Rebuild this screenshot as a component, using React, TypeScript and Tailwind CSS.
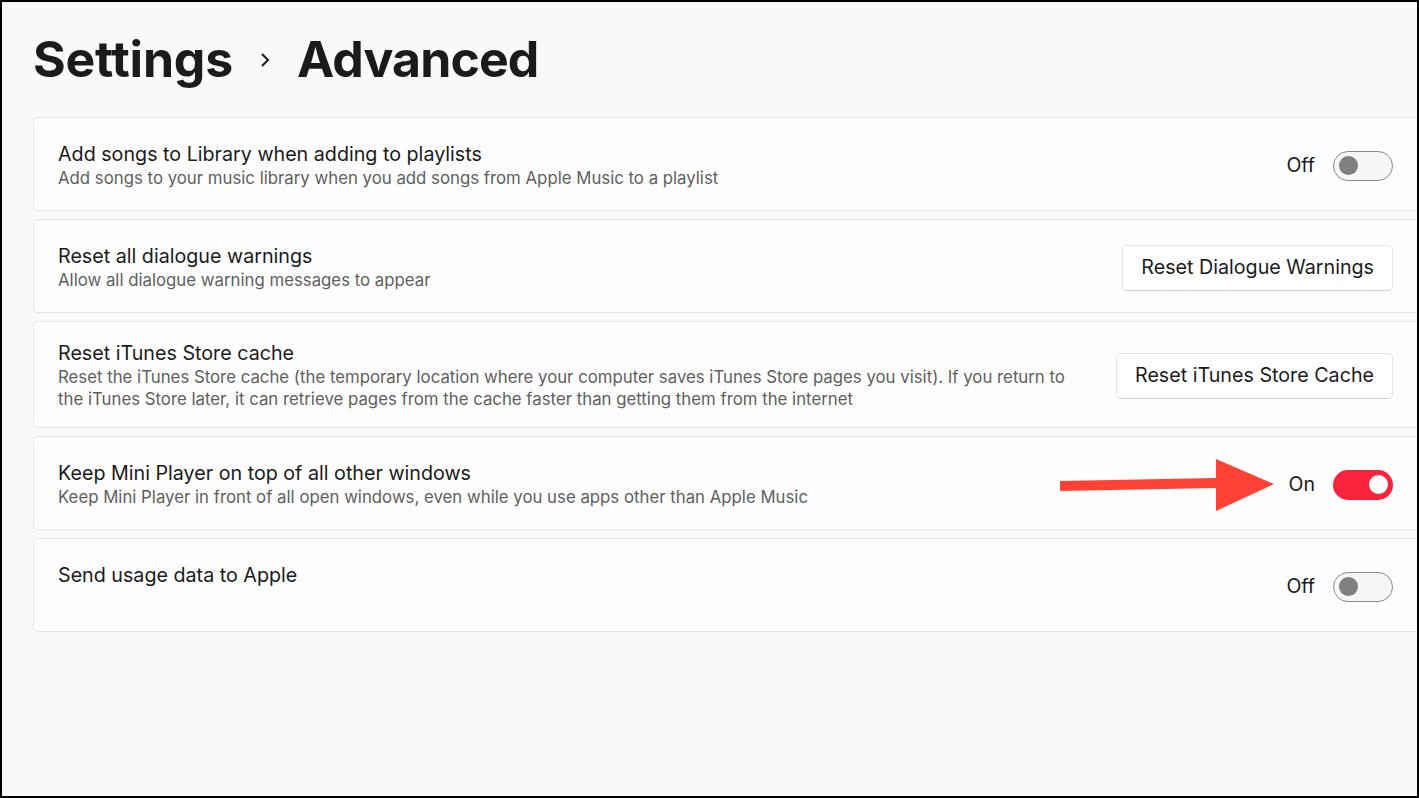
import React from "react";

type Row = {
  title: string;
  desc?: string;
  control: "off" | "on" | string;
};

const ROWS: Row[] = [
  {
    title: "Add songs to Library when adding to playlists",
    desc: "Add songs to your music library when you add songs from Apple Music to a playlist",
    control: "off",
  },
  {
    title: "Reset all dialogue warnings",
    desc: "Allow all dialogue warning messages to appear",
    control: "Reset Dialogue Warnings",
  },
  {
    title: "Reset iTunes Store cache",
    desc:
      "Reset the iTunes Store cache (the temporary location where your computer saves iTunes Store pages you visit). If you return to the iTunes Store later, it can retrieve pages from the cache faster than getting them from the internet",
    control: "Reset iTunes Store Cache",
  },
  {
    title: "Keep Mini Player on top of all other windows",
    desc: "Keep Mini Player in front of all open windows, even while you use apps other than Apple Music",
    control: "on",
  },
  {
    title: "Send usage data to Apple",
    control: "off",
  },
];

function Toggle({ on }: { on: boolean }) {
  return (
    <div className="flex items-center gap-[18px]">
      <span className="text-[19.5px] text-[#1b1b1b]">{on ? "On" : "Off"}</span>
      {on ? (
        <div className="w-[60px] h-[30px] rounded-full bg-[#fa233b] flex items-center justify-end pr-[5px]">
          <div className="w-[19px] h-[19px] rounded-full bg-white" />
        </div>
      ) : (
        <div className="w-[60px] h-[30px] rounded-full bg-[#f6f6f6] border border-[#8a8a8a] flex items-center pl-[5px]">
          <div className="w-[19px] h-[19px] rounded-full bg-[#7f7f7f]" />
        </div>
      )}
    </div>
  );
}

function SettingRow({ row }: { row: Row }) {
  const isToggle = row.control === "on" || row.control === "off";
  return (
    <div className="flex items-center justify-between min-h-[94px] pt-[20px] pb-[17px] pl-[24px] pr-[24px] bg-[#fdfdfd] border border-r-0 border-[#e5e5e5] rounded-l-[5px]">
      <div className="flex-1 pr-[40px]">
        <p className="text-[19.7px] leading-[23px] text-[#1b1b1b]">{row.title}</p>
        <p className="text-[16.8px] leading-[22px] text-[#5f5f5f] min-h-[22px] mt-[1px]">{row.desc ?? ""}</p>
      </div>
      {isToggle ? (
        <Toggle on={row.control === "on"} />
      ) : (
        <button className="h-[46px] px-[18px] bg-white border border-[#e6e6e6] border-b-[#d0d0d0] rounded-[5px] text-[19.7px] text-[#1b1b1b] whitespace-nowrap">
          {row.control}
        </button>
      )}
    </div>
  );
}

export default function App() {
  return (
    <div
      className="relative w-[1419px] h-[798px] border-2 border-black bg-[#f9f9f9] overflow-hidden"
      style={{ fontFamily: "Inter, 'Noto Sans', sans-serif" }}
    >
      <div className="pl-[31px] pt-[24px]">
        <h1 className="flex items-center h-[66px] text-[50px] font-bold text-[#1b1b1b]">
          <span className="tracking-[-0.2px]">Settings</span>
          <svg width="12" height="16" viewBox="0 0 12 16" className="ml-[26px] mr-[26px] mt-[2px]">
            <polyline points="3,2 9,8 3,14" fill="none" stroke="#1b1b1b" strokeWidth="2" />
          </svg>
          <span className="tracking-[-0.9px]">Advanced</span>
        </h1>
        <div className="mt-[25px] flex flex-col gap-[8px]">
          {ROWS.map((r) => (
            <SettingRow key={r.title} row={r} />
          ))}
        </div>
      </div>

      {/* annotation arrow */}
      <svg className="absolute left-[1058px] top-[455px]" width="220" height="56" viewBox="0 0 220 56">
        <polygon points="0,24 156,21 156,2 214,27 156,54 156,31 0,34" fill="#ff4136" />
      </svg>
    </div>
  );
}
